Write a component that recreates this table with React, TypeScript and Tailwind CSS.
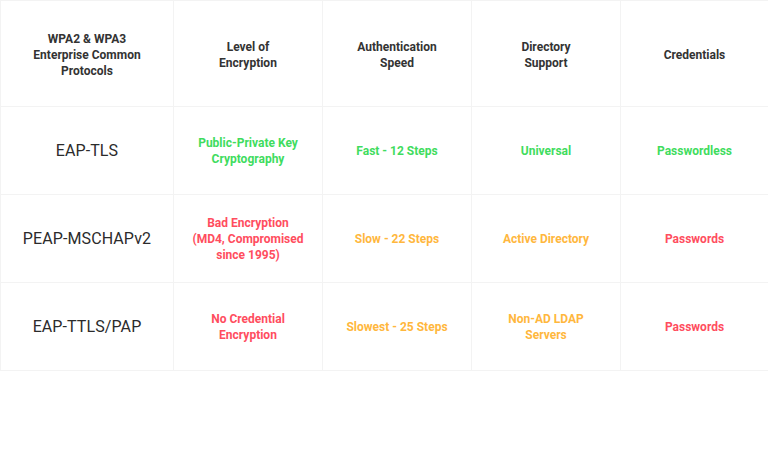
import React from 'react';

type Tone = 'green' | 'orange' | 'red';

const toneClass: Record<Tone, string> = {
  green: 'text-[#3fdc5e]',
  orange: 'text-[#ffb73d]',
  red: 'text-[#ff4d5e]',
};

const headers: string[][] = [
  ['WPA2 & WPA3', 'Enterprise Common', 'Protocols'],
  ['Level of', 'Encryption'],
  ['Authentication', 'Speed'],
  ['Directory', 'Support'],
  ['Credentials'],
];

const rows: { name: string; cells: { lines: string[]; tone: Tone }[] }[] = [
  {
    name: 'EAP-TLS',
    cells: [
      { lines: ['Public-Private Key', 'Cryptography'], tone: 'green' },
      { lines: ['Fast - 12 Steps'], tone: 'green' },
      { lines: ['Universal'], tone: 'green' },
      { lines: ['Passwordless'], tone: 'green' },
    ],
  },
  {
    name: 'PEAP-MSCHAPv2',
    cells: [
      { lines: ['Bad Encryption', '(MD4, Compromised', 'since 1995)'], tone: 'red' },
      { lines: ['Slow - 22 Steps'], tone: 'orange' },
      { lines: ['Active Directory'], tone: 'orange' },
      { lines: ['Passwords'], tone: 'red' },
    ],
  },
  {
    name: 'EAP-TTLS/PAP',
    cells: [
      { lines: ['No Credential', 'Encryption'], tone: 'red' },
      { lines: ['Slowest - 25 Steps'], tone: 'orange' },
      { lines: ['Non-AD LDAP', 'Servers'], tone: 'orange' },
      { lines: ['Passwords'], tone: 'red' },
    ],
  },
];

function Lines({ lines }: { lines: string[] }) {
  return (
    <>
      {lines.map((l, i) => (
        <span key={i} className="block">
          {l}
        </span>
      ))}
    </>
  );
}

export default function App() {
  const cell = 'flex items-center justify-center text-center border-r border-b border-[#f3f3f3]';

  return (
    <div className="w-[768px] h-[456px] bg-white font-['Roboto',sans-serif]">
      <div className="grid grid-cols-[173px_149px_149px_149px_148px] border-l border-t border-[#f3f3f3]">
        {headers.map((h, i) => (
          <div
            key={i}
            className={`${cell} h-[106px] pt-[2px] text-[12px] leading-[16px] font-bold text-[#333333]`}
          >
            <div>
              <Lines lines={h} />
            </div>
          </div>
        ))}

        {rows.map((r) => (
          <React.Fragment key={r.name}>
            <div className={`${cell} h-[88px] pt-[1px] text-[16px] text-[#2b2b2b] tracking-[0.1px]`}>
              {r.name}
            </div>
            {r.cells.map((c, j) => (
              <div
                key={j}
                className={`${cell} h-[88px] pt-[1px] text-[12px] leading-[16px] font-bold ${toneClass[c.tone]}`}
              >
                <div>
                  <Lines lines={c.lines} />
                </div>
              </div>
            ))}
          </React.Fragment>
        ))}
      </div>
    </div>
  );
}
